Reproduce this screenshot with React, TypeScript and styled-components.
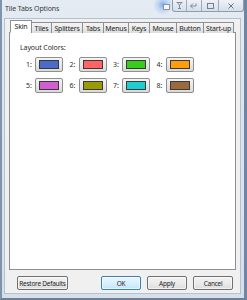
import React from "react";
import styled, { createGlobalStyle } from "styled-components";

const Global = createGlobalStyle`
  html, body { margin: 0; padding: 0; background: #6f8aa8; }
  body { width: 247px; height: 300px; overflow: hidden; font-family: "Noto Sans", "DejaVu Sans", sans-serif; }
`;

const Window = styled.div`
  width: 247px;
  height: 300px;
  box-sizing: border-box;
  display: flex;
  flex-direction: column;
  background: linear-gradient(180deg, #e4ebf3 0%, #dbe4ee 40%, #d6e0eb 100%);
  border-left: 2px solid #7f93ab;
  border-right: 3px solid #6f86a3;
  border-bottom: 2px solid #6c7f96;
`;

const TitleBar = styled.div`
  height: 18px;
  flex: none;
  display: flex;
  align-items: flex-start;
  background: radial-gradient(circle at 161px 5px, rgba(90, 150, 230, 0.75) 0px, rgba(120, 170, 235, 0.35) 5px, rgba(255, 255, 255, 0) 10px);
`;

const Title = styled.div`
  font-size: 7px;
  color: #3a3a3a;
  margin: 4px 0 0 3px;
  letter-spacing: -0.1px;
`;

const Caption = styled.div`
  margin-left: auto;
  display: flex;
  align-items: flex-start;
`;

const Grip = styled.div`
  width: 5px;
  height: 4px;
  border: 1px solid #8796a8;
  margin: 4px 2px 0 0;
  background: #f4f6f9;
`;

const CapGroup = styled.div`
  display: flex;
  height: 11px;
  border: 1px solid #8e9db0;
  border-top: none;
  border-radius: 0 0 3px 3px;
  overflow: hidden;
  background: linear-gradient(180deg, #eef2f7 0%, #dfe6ee 60%, #d5dde7 100%);
`;

const CapButton = styled.div<{ $w: number; $last?: boolean }>`
  width: ${(p) => p.$w}px;
  height: 11px;
  display: flex;
  align-items: center;
  justify-content: center;
  border-right: ${(p) => (p.$last ? "none" : "1px solid #9eacbd")};
`;

const Client = styled.div`
  flex: 1;
  margin: 0 3px 4px 2px;
  background: #f0f0f0;
  border: 1px solid #b4c1cf;
  display: flex;
  flex-direction: column;
  padding: 1px 3px 0 4px;
`;

const TabStrip = styled.div`
  display: flex;
  align-items: flex-end;
  height: 13px;
  padding-left: 1px;
  position: relative;
  z-index: 1;
`;

const Tab = styled.div<{ $w: number; $active?: boolean }>`
  width: ${(p) => p.$w}px;
  box-sizing: border-box;
  height: ${(p) => (p.$active ? 13 : 11)}px;
  margin-left: -1px;
  border: 1px solid #8c8f96;
  border-bottom: ${(p) => (p.$active ? "1px solid #ffffff" : "none")};
  border-radius: 1px 1px 0 0;
  background: ${(p) => (p.$active ? "#ffffff" : "linear-gradient(180deg, #f3f3f3 0%, #ebebeb 50%, #dddddd 100%)")};
  font-size: 7px;
  color: #1e1e1e;
  display: flex;
  align-items: center;
  justify-content: center;
  white-space: nowrap;
  letter-spacing: -0.2px;
  overflow: hidden;
  &:first-child { margin-left: 0; }
`;

const Panel = styled.div`
  height: 238px;
  box-sizing: border-box;
  margin-top: -1px;
  margin-right: 1px;
  background: #ffffff;
  border: 1px solid #8c8f96;
  padding: 10px 0 0 10px;
`;

const SectionLabel = styled.div`
  font-size: 7px;
  color: #2a2a2a;
  letter-spacing: -0.1px;
`;

const ColorGrid = styled.div`
  display: grid;
  grid-template-columns: repeat(4, 43.5px);
  row-gap: 6px;
  margin: 5px 0 0 6px;
`;

const ColorCell = styled.div`
  display: flex;
  align-items: center;
`;

const ColorLabel = styled.span`
  width: 9px;
  font-size: 7px;
  color: #2a2a2a;
`;

const SwatchButton = styled.div`
  width: 28px;
  height: 15px;
  box-sizing: border-box;
  border: 1px solid #8f8f8f;
  border-radius: 2px;
  background: linear-gradient(180deg, #f4f4f4 0%, #e8e8e8 50%, #d9d9d9 100%);
  padding: 2px 3px;
`;

const SwatchFill = styled.div<{ $color: string }>`
  height: 100%;
  box-sizing: border-box;
  border: 1px solid #3a3a3a;
  background: ${(p) => p.$color};
`;

const Footer = styled.div`
  display: flex;
  align-items: center;
  margin-top: 6px;
  padding: 0 4px 0 8px;
`;

const Button = styled.div<{ $w: number; $default?: boolean }>`
  width: ${(p) => p.$w}px;
  height: 14px;
  box-sizing: border-box;
  border: 1px solid ${(p) => (p.$default ? "#3c7fb1" : "#707070")};
  border-radius: 2px;
  background: ${(p) =>
    p.$default
      ? "linear-gradient(180deg, #eaf6fd 0%, #d9f0fc 50%, #bee6fd 100%)"
      : "linear-gradient(180deg, #f2f2f2 0%, #ebebeb 50%, #dddddd 100%)"};
  box-shadow: inset 0 0 0 1px rgba(255, 255, 255, 0.55);
  font-size: 6.5px;
  color: #1e1e1e;
  display: flex;
  align-items: center;
  justify-content: center;
  white-space: nowrap;
  letter-spacing: -0.25px;
  overflow: hidden;
`;

const Spacer = styled.div`
  flex: 1;
`;

const ButtonGroup = styled.div`
  display: flex;
  gap: 6px;
`;

const tabs = [
  { label: "Skin", w: 22, active: true },
  { label: "Tiles", w: 21 },
  { label: "Splitters", w: 32 },
  { label: "Tabs", w: 22 },
  { label: "Menus", w: 26 },
  { label: "Keys", w: 22 },
  { label: "Mouse", w: 28 },
  { label: "Button", w: 28 },
  { label: "Start-up", w: 31 },
];

const colors = [
  "#4a6bc8",
  "#ff6363",
  "#36cc1c",
  "#ff9e0c",
  "#d35ed3",
  "#999a04",
  "#1fcfcf",
  "#9b6a3b",
];

const Stroke = "#6b7684";

export default function App() {
  return (
    <>
      <Global />
      <Window>
        <TitleBar>
          <Title>Tile Tabs Options</Title>
          <Caption>
            <Grip />
            <CapGroup>
              <CapButton $w={13}>
                <svg width="7" height="7" viewBox="0 0 7 7">
                  <path d="M0.5 0.5h6M1.5 0.5l2 3 2-3M3.5 3.5v3M2 6.5h3" stroke={Stroke} strokeWidth="0.8" fill="none" />
                </svg>
              </CapButton>
              <CapButton $w={14}>
                <svg width="8" height="6" viewBox="0 0 8 6">
                  <path d="M3 0.5L0.5 3 3 5.5M0.5 3h5.5v-2.5" stroke={Stroke} strokeWidth="0.8" fill="none" />
                </svg>
              </CapButton>
              <CapButton $w={16}>
                <svg width="7" height="6" viewBox="0 0 7 6">
                  <rect x="0.5" y="0.5" width="6" height="5" stroke={Stroke} strokeWidth="0.9" fill="none" />
                </svg>
              </CapButton>
              <CapButton $w={24} $last>
                <svg width="6" height="6" viewBox="0 0 6 6">
                  <path d="M0.5 0.5l5 5M5.5 0.5l-5 5" stroke={Stroke} strokeWidth="1" fill="none" />
                </svg>
              </CapButton>
            </CapGroup>
          </Caption>
        </TitleBar>
        <Client>
          <TabStrip>
            {tabs.map((t) => (
              <Tab key={t.label} $w={t.w} $active={t.active}>
                {t.label}
              </Tab>
            ))}
          </TabStrip>
          <Panel>
            <SectionLabel>Layout Colors:</SectionLabel>
            <ColorGrid>
              {colors.map((c, i) => (
                <ColorCell key={c}>
                  <ColorLabel>{i + 1}:</ColorLabel>
                  <SwatchButton>
                    <SwatchFill $color={c} />
                  </SwatchButton>
                </ColorCell>
              ))}
            </ColorGrid>
          </Panel>
          <Footer>
            <Button $w={51}>Restore Defaults</Button>
            <Spacer />
            <ButtonGroup>
              <Button $w={40} $default>OK</Button>
              <Button $w={40}>Apply</Button>
              <Button $w={40}>Cancel</Button>
            </ButtonGroup>
          </Footer>
        </Client>
      </Window>
    </>
  );
}
